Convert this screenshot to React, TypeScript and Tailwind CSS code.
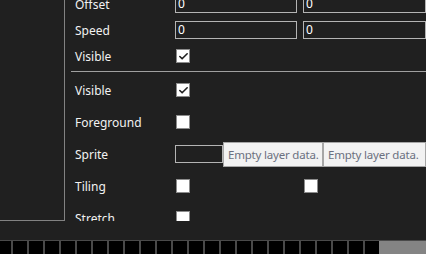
import { Check } from "lucide-react";

const font = { fontFamily: '"Noto Sans", "Open Sans", sans-serif' };

function Box({ value, className = "" }: { value?: string; className?: string }) {
  return (
    <div className={`h-[18px] shrink-0 border border-[#b4b4b4] pl-[2px] flex items-center text-[12px] text-white ${className}`}>
      {value}
    </div>
  );
}

function CheckBox({ checked = false }: { checked?: boolean }) {
  return (
    <div className="w-[14px] h-[14px] ml-[1px] bg-white border border-[#8c8c8c] flex items-center justify-center">
      {checked && <Check size={11} strokeWidth={3.5} className="text-[#202020]" />}
    </div>
  );
}

function Row({ label, h, children }: { label: string; h: string; children?: React.ReactNode }) {
  return (
    <div className={`flex items-center pl-[10px] ${h}`}>
      <span className="w-[100px] pt-[2px] text-[12px] text-[#f2f2f2] shrink-0">{label}</span>
      {children}
    </div>
  );
}

function Tip({ w }: { w: string }) {
  return (
    <div className={`h-[25px] shrink-0 pl-[4px] pt-[1px] bg-[#f2f2f2] border border-[#a6a6a6] flex items-center text-[11.5px] tracking-[-0.2px] text-[#6b7080] whitespace-nowrap overflow-hidden ${w}`}>
      Empty layer data.
    </div>
  );
}

export default function App() {
  const cells = Array.from({ length: 23 });
  return (
    <div className="w-[426px] h-[254px] bg-[#202020] flex flex-col overflow-hidden" style={font}>
      <div className="flex h-[240px]">
        <div className="w-[65px] h-[221px] shrink-0 border-r border-b border-[#828282]" />
        <div className="flex-1 h-[221px] overflow-hidden">
          <div className="-mt-[9px] flex flex-col">
            <Row label="Offset" h="h-[26px]">
              <div className="grid grid-cols-[122px_123px] gap-[6px]">
                <Box value="0" />
                <Box value="0" />
              </div>
            </Row>
            <Row label="Speed" h="h-[26px]">
              <div className="grid grid-cols-[122px_123px] gap-[6px]">
                <Box value="0" />
                <Box value="0" />
              </div>
            </Row>
            <Row label="Visible" h="h-[26px]">
              <CheckBox checked />
            </Row>
            <div className="ml-[6px] mt-[2px] mb-[2px] h-px bg-[#a0a0a0]" />
            <Row label="Visible" h="h-[32px]">
              <CheckBox checked />
            </Row>
            <Row label="Foreground" h="h-[32px]">
              <CheckBox />
            </Row>
            <Row label="Sprite" h="h-[32px]">
              <Box className="w-[48px]" />
              <Tip w="w-[100px]" />
              <Tip w="w-[103px]" />
            </Row>
            <Row label="Tiling" h="h-[32px]">
              <div className="grid grid-cols-[122px_123px] gap-[6px]">
                <CheckBox />
                <CheckBox />
              </div>
            </Row>
            <Row label="Stretch" h="h-[32px]">
              <CheckBox />
            </Row>
          </div>
        </div>
      </div>
      <div className="flex h-[14px] border-t border-[#4a4a4a]">
        <div className="flex gap-[2px] bg-[#4a4a4a]">
          <div className="w-[11px] bg-black" />
          {cells.map((_, i) => (
            <div key={i} className="w-[14px] bg-black" />
          ))}
        </div>
        <div className="flex-1 bg-[#848484]" />
      </div>
    </div>
  );
}
